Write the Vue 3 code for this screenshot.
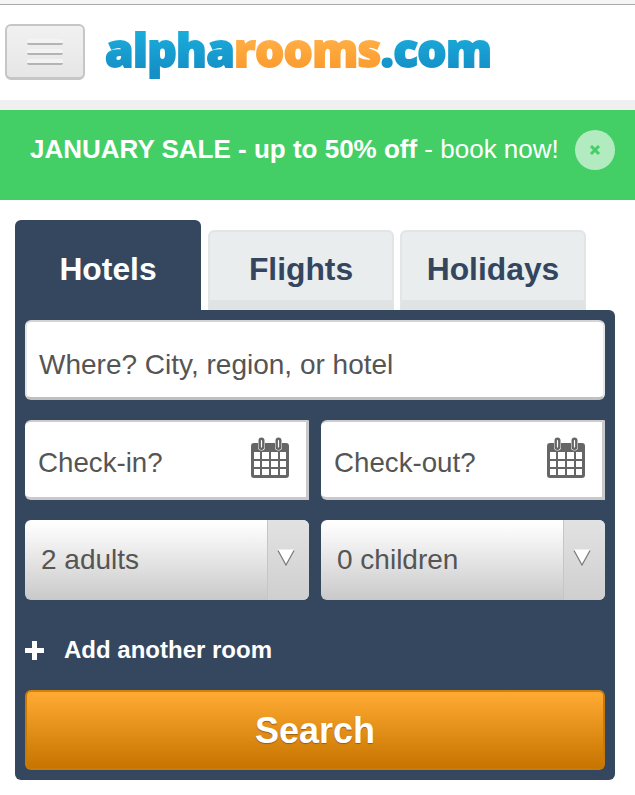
<script setup>
const tabs = [
  { label: 'Hotels', active: true },
  { label: 'Flights', active: false },
  { label: 'Holidays', active: false }
]
const dates = ['Check-in?', 'Check-out?']
const selects = ['2 adults', '0 children']
</script>

<template>
  <div class="page">
    <div class="topline"></div>
    <header class="header">
      <button class="menu" aria-label="Menu">
        <span></span><span></span><span></span>
      </button>
      <div class="logo"><span class="blue">alpha</span><span class="orange">rooms</span><span class="blue">.com</span></div>
    </header>
    <div class="sale">
      <p class="sale-text"><b>JANUARY SALE - up to 50% off</b> - book now!</p>
      <span class="close">
        <svg width="12" height="12" viewBox="0 0 12 12"><path d="M2 2 L10 10 M10 2 L2 10" stroke="#44cf66" stroke-width="3" fill="none"/></svg>
      </span>
    </div>
    <section class="search">
      <nav class="tabs">
        <div v-for="t in tabs" :key="t.label" class="tab" :class="{ active: t.active }">{{ t.label }}</div>
      </nav>
      <div class="panel">
        <div class="field where">Where? City, region, or hotel</div>
        <div class="row">
          <div v-for="d in dates" :key="d" class="field date">
            <span>{{ d }}</span>
            <svg width="38" height="42" viewBox="0 0 38 42" class="cal">
              <path fill="#666" fill-rule="evenodd" d="M3 6 H7 V10 a3.5 3.5 0 0 0 7 0 V6 H24 V10 a3.5 3.5 0 0 0 7 0 V6 H35 a3 3 0 0 1 3 3 V38 a3 3 0 0 1 -3 3 H3 a3 3 0 0 1 -3 -3 V9 a3 3 0 0 1 3 -3 Z
                M3 15 V22 H9 V15 Z M11 15 V22 H18 V15 Z M20 15 V22 H27 V15 Z M29 15 V22 H35 V15 Z
                M3 24 V30 H9 V24 Z M11 24 V30 H18 V24 Z M20 24 V30 H27 V24 Z M29 24 V30 H35 V24 Z
                M3 32 V38 H9 V32 Z M11 32 V38 H18 V32 Z M20 32 V38 H27 V32 Z M29 32 V38 H35 V32 Z"/>
              <path fill="none" stroke="#666" stroke-width="2.4" d="M8.7 10 V3.5 a1.8 1.8 0 0 1 3.6 0 V10 a1.8 1.8 0 0 1 -3.6 0 Z M25.7 10 V3.5 a1.8 1.8 0 0 1 3.6 0 V10 a1.8 1.8 0 0 1 -3.6 0 Z"/>
            </svg>
          </div>
        </div>
        <div class="row">
          <div v-for="s in selects" :key="s" class="select">
            <span class="select-label">{{ s }}</span>
            <span class="arrow">
              <svg width="18" height="17" viewBox="0 0 18 17"><path d="M0.5 0.5 H17.5 L9 16 Z" fill="#fff"/><path d="M1 1.5 L9 16 L17 1.5" fill="none" stroke="#777" stroke-width="1.2"/></svg>
            </span>
          </div>
        </div>
        <div class="add">
          <svg width="19" height="19" viewBox="0 0 19 19"><path d="M7 0 H12 V7 H19 V12 H12 V19 H7 V12 H0 V7 H7 Z" fill="#fff"/></svg>
          <span>Add another room</span>
        </div>
        <button class="go">Search</button>
      </div>
    </section>
  </div>
</template>

<style>
html, body { margin: 0; background: #fff; }
</style>

<style scoped>
.page {
  width: 635px;
  height: 795px;
  overflow: hidden;
  background: #fff;
  font-family: "Liberation Sans", Arial, sans-serif;
}
.topline {
  height: 4px;
  background: #f5f5f5;
  border-bottom: 1px solid #aaa;
}
.header {
  height: 95px;
  box-sizing: border-box;
  display: flex;
  align-items: flex-start;
  padding: 19px 0 0 5px;
}
.menu {
  width: 80px;
  height: 56px;
  box-sizing: border-box;
  padding: 0;
  border: 2px solid #c6c6c6;
  border-bottom-width: 3px;
  border-radius: 6px;
  background: linear-gradient(#f1f1f1, #e6e6e6);
  display: flex;
  flex-direction: column;
  align-items: center;
  justify-content: center;
  gap: 4px;
}
.menu span {
  width: 36px;
  height: 6px;
  box-sizing: border-box;
  border-radius: 2px;
  background: #f3f3f3;
  border-bottom: 2px solid #b4b4b4;
}
.logo {
  margin: -5px 0 0 20px;
  font-family: "Open Sans", sans-serif;
  font-weight: 800;
  font-size: 46px;
  line-height: 60px;
  letter-spacing: -0.7px;
  white-space: nowrap;
  filter: blur(0.6px);
}
.logo span {
  -webkit-background-clip: text;
  background-clip: text;
  color: transparent;
  -webkit-text-stroke: 1.8px transparent;
}
.blue { background-image: linear-gradient(#1aabd9 25%, #1590c6 85%); }
.orange { background-image: linear-gradient(#ffae45 35%, #fb9a2c 85%); }
.sale {
  margin-top: 10px;
  height: 90px;
  background: #44cf66;
  box-shadow: 0 -10px 0 #f0f0f0;
  display: flex;
  align-items: flex-start;
  padding: 20px 20px 0 30px;
  box-sizing: border-box;
  color: #fff;
}
.sale-text {
  margin: 4px 0 0;
  flex: 1;
  font-size: 26px;
  line-height: 30px;
  white-space: nowrap;
}
.close {
  width: 40px;
  height: 40px;
  border-radius: 50%;
  background: #b3ebc0;
  display: flex;
  align-items: center;
  justify-content: center;
}
.search { padding: 20px 20px 0 15px; }
.tabs {
  display: flex;
  align-items: flex-end;
  height: 90px;
}
.tab {
  width: 186px;
  height: 80px;
  box-sizing: border-box;
  margin-right: 6px;
  background: #e9edee;
  border: 2px solid #e2e5e6;
  border-bottom: 10px solid #e0e3e4;
  border-radius: 6px 6px 0 0;
  color: #34465f;
  font-size: 31.8px;
  font-weight: bold;
  text-align: center;
  line-height: 74px;
}
.tab:first-child { margin-right: 7px; }
.tab.active {
  height: 90px;
  background: #35475f;
  border: 0;
  color: #fff;
  line-height: 98px;
}
.panel {
  height: 470px;
  box-sizing: border-box;
  background: #35475f;
  border-radius: 0 6px 6px 6px;
  padding: 10px;
  display: flex;
  flex-direction: column;
}
.field {
  background: #fff;
  box-sizing: border-box;
  height: 80px;
  color: #555;
  display: flex;
  align-items: center;
  font-size: 28px;
}
.where {
  padding: 10px 0 0 12px;
  border-radius: 6px;
  border-style: solid;
  border-width: 2px 2px 3px 2px;
  border-color: #d4d4d4 #e6e6e6 #c0c0c0 #e6e6e6;
  margin-bottom: 20px;
}
.row {
  display: flex;
  gap: 12px;
  margin-bottom: 20px;
}
.date {
  flex: 1;
  justify-content: space-between;
  font-size: 27.7px;
  padding: 0 17px 0 13px;
  border-radius: 6px 0 0 6px;
  border-style: solid;
  border-width: 2px 3px 3px 0;
  border-color: #ccc #c9c9c9 #c9c9c9 #fff;
}
.date span { padding-top: 6px; }
.cal { margin-top: -4px; }
.select {
  flex: 1;
  height: 80px;
  display: flex;
  border-radius: 6px;
  overflow: hidden;
  background: linear-gradient(#fff 3%, #c9c9c9);
  color: #555;
  font-size: 28px;
}
.select-label {
  flex: 1;
  padding-left: 16px;
  line-height: 80px;
}
.arrow {
  width: 42px;
  box-sizing: border-box;
  border-left: 1px solid #c6c6c6;
  background: linear-gradient(#e2e2e2, #cfcfcf);
  display: flex;
  justify-content: center;
  padding: 29px 5px 0 0;
}
.add {
  display: flex;
  align-items: center;
  gap: 20px;
  margin-top: -20px;
  padding-top: 30px;
  height: 40px;
  color: #fff;
  font-size: 24px;
  font-weight: bold;
}
.go {
  margin-top: 20px;
  height: 80px;
  box-sizing: border-box;
  padding: 2px 0 0;
  border: 2px solid #c87a08;
  border-top-color: #d08410;
  border-radius: 6px;
  background: linear-gradient(#ffab33, #c77400);
  color: #fff;
  font-family: inherit;
  font-size: 36px;
  font-weight: bold;
  text-shadow: 0 1px 1px #9a5e10;
}
</style>
